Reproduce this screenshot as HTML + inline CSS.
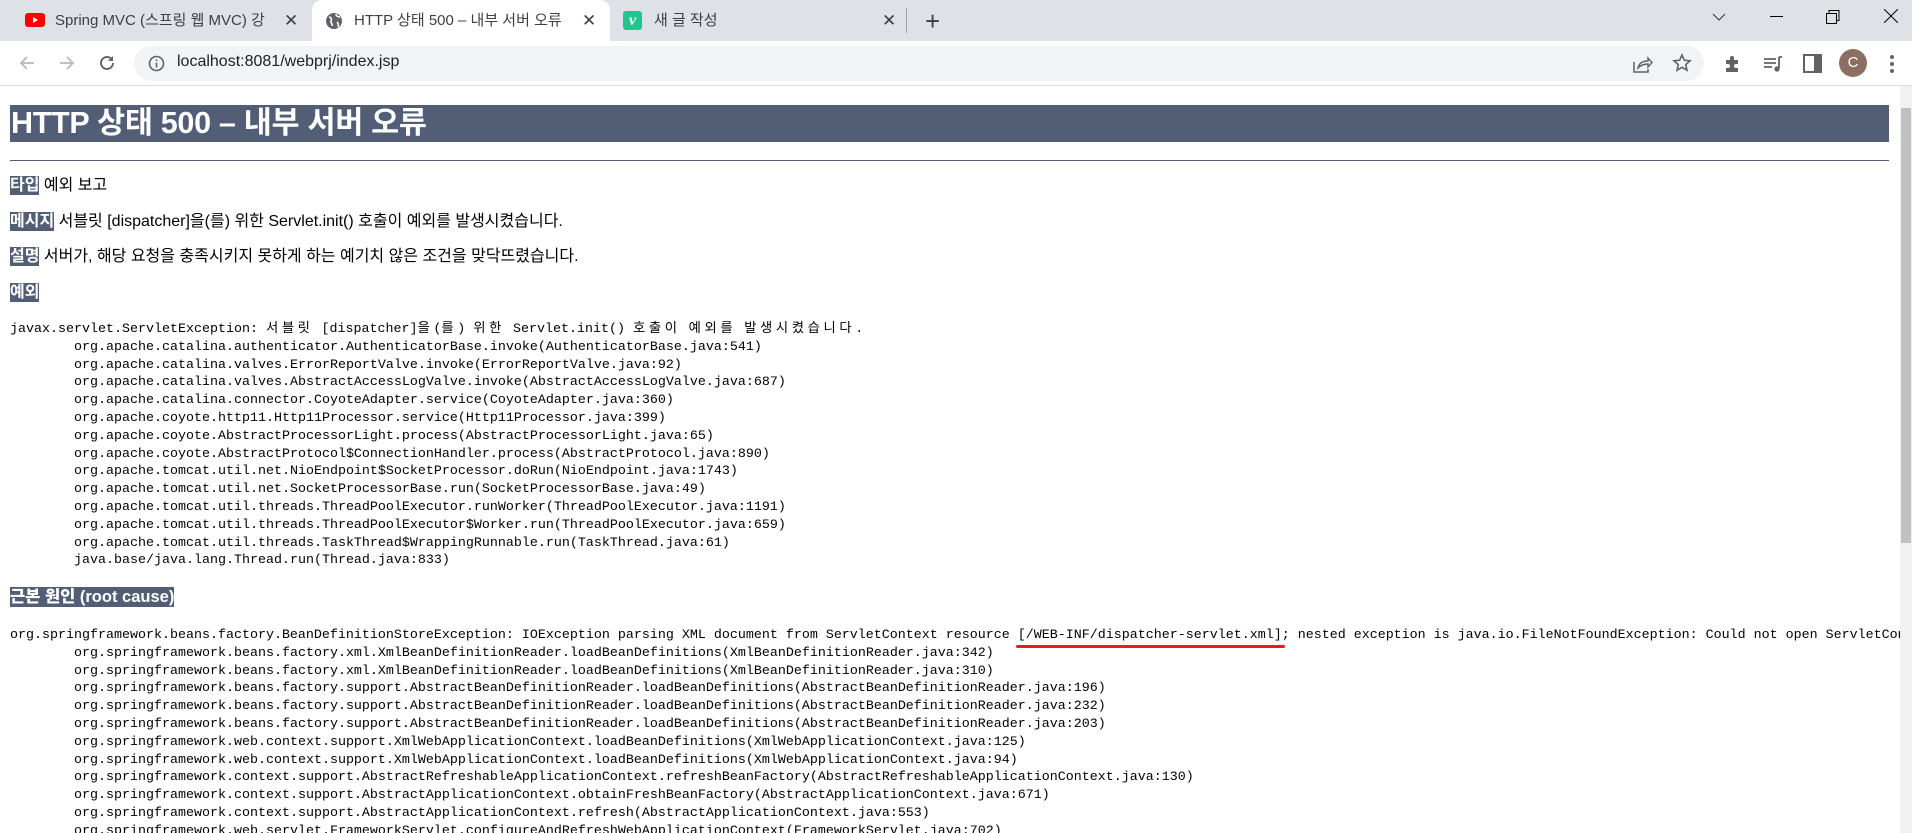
<!DOCTYPE html>
<html><head><meta charset="utf-8">
<style>
*{margin:0;padding:0;box-sizing:border-box}
body{width:1912px;height:833px;overflow:hidden;position:relative;background:#fff;font-family:"Liberation Sans","Noto Sans CJK KR",sans-serif}
.tabbar{position:absolute;left:0;top:0;width:1912px;height:41px;background:#dee1e6}
.tab{position:absolute;top:0;height:41px;font-size:15px;color:#3c4043;line-height:41px;white-space:nowrap}
.tab .x{position:absolute;font-size:17px;color:#3c4043;top:0}
.active{background:#fff;border-radius:10px 10px 0 0}
.toolbar{position:absolute;left:0;top:41px;width:1912px;height:45px;background:#fff;border-bottom:1px solid #dadce0}
.omni{position:absolute;left:134px;top:5px;width:1570px;height:35px;background:#f1f3f4;border-radius:18px}
.omni span{position:absolute;left:43px;top:7px;font-size:16px;color:#202124}
.content{position:absolute;left:0;top:86px;width:1900px;height:747px;overflow:hidden}
.sb{position:absolute;left:1900px;top:86px;width:12px;height:747px;background:#f1f1f1}
.sb div{position:absolute;left:1px;top:22px;width:10px;height:435px;background:#c1c1c1}
h1{position:absolute;left:10px;top:19px;width:1879px;height:37px;background:#525d76;color:#fff;font-size:30.5px;font-weight:bold;line-height:37px;padding-left:1px;font-family:"Liberation Sans","Noto Sans CJK KR",sans-serif;letter-spacing:-0.3px}
.hr{position:absolute;left:10px;top:74px;width:1879px;height:1px;background:#525d76}
.p{position:absolute;left:10px;font-size:16px;line-height:18px;color:#000;white-space:nowrap}
.p b{background:#525d76;color:#fff;padding:1px 0}
pre{position:absolute;left:10px;font-family:"Liberation Mono","Noto Sans CJK KR",monospace;font-size:13.33px;line-height:17.8px;color:#000;white-space:pre}
.k{letter-spacing:3.6px}
.red{position:absolute;left:1016px;top:559px;width:269px;height:3px;background:#e02020;border-radius:2px}
</style></head><body>
<div class="tabbar">
 <div class="tab" style="left:0;width:312px">
  <svg style="position:absolute;left:25px;top:13px" width="20" height="14" viewBox="0 0 20 14"><rect width="20" height="14" rx="3" fill="#f00"/><path d="M8 4v6l5-3z" fill="#fff"/></svg>
  <span style="position:absolute;left:55px">Spring MVC (스프링 웹 MVC) 강</span><span class="x" style="left:284px">✕</span></div>
 <div class="tab active" style="left:312px;width:298px">
  <svg style="position:absolute;left:13px;top:12px" width="18" height="18" viewBox="0 0 18 18"><circle cx="9" cy="9" r="8" fill="#5f6368"/><path d="M4 5c2 0 3 2 2 4s2 2 1 5M11 2c0 2 2 3 4 3M12 10c1 1 2 3 1 5" stroke="#fff" stroke-width="1.6" fill="none"/></svg>
  <span style="position:absolute;left:42px">HTTP 상태 500 – 내부 서버 오류</span><span class="x" style="left:270px">✕</span></div>
 <div class="tab" style="left:610px;width:298px">
  <div style="position:absolute;left:13px;top:11px;width:19px;height:19px;background:#1fc68d;border-radius:3px;color:#fff;font:bold italic 16px/19px 'Liberation Serif',serif;text-align:center">v</div>
  <span style="position:absolute;left:44px">새 글 작성</span><span class="x" style="left:272px">✕</span>
  <div style="position:absolute;left:296px;top:8px;width:1px;height:25px;background:#9aa0a6"></div></div>
 <div style="position:absolute;left:925px;top:6px;font-size:26px;color:#3c4043">+</div>
 <svg style="position:absolute;left:1712px;top:12px" width="14" height="10"><path d="M1 2l6 6 6-6" stroke="#333" fill="none"/></svg>
 <div style="position:absolute;left:1770px;top:16px;width:13px;height:1px;background:#000"></div>
 <svg style="position:absolute;left:1826px;top:10px" width="14" height="14"><rect x="0.5" y="3.5" width="10" height="10" fill="none" stroke="#000"/><path d="M3 3.5V.5h10v10h-2.5" fill="none" stroke="#000"/></svg>
 <svg style="position:absolute;left:1884px;top:9px" width="14" height="14"><path d="M0 0l14 14M14 0L0 14" stroke="#000"/></svg>
</div>
<div class="toolbar">
 <svg style="position:absolute;left:18px;top:13px" width="18" height="18" viewBox="0 0 18 18"><path d="M16 9H3M9 3L3 9l6 6" stroke="#b6b9bd" stroke-width="1.8" fill="none"/></svg>
 <svg style="position:absolute;left:58px;top:13px" width="18" height="18" viewBox="0 0 18 18"><path d="M2 9h13M9 3l6 6-6 6" stroke="#b6b9bd" stroke-width="1.8" fill="none"/></svg>
 <svg style="position:absolute;left:98px;top:13px" width="18" height="18" viewBox="0 0 18 18"><path d="M15 9a6 6 0 1 1-2-4.5" stroke="#5f6368" stroke-width="1.9" fill="none"/><path d="M15 2v5h-5z" fill="#5f6368"/></svg>
 <div class="omni">
  <svg style="position:absolute;left:14px;top:9px" width="17" height="17" viewBox="0 0 17 17"><circle cx="8.5" cy="8.5" r="7" stroke="#5f6368" stroke-width="1.6" fill="none"/><path d="M8.5 7.5v5M8.5 4.5v1.5" stroke="#5f6368" stroke-width="1.6"/></svg>
  <span>localhost:8081/webprj/index.jsp</span>
  <svg style="position:absolute;left:1499px;top:8px" width="20" height="19" viewBox="0 0 20 19"><path d="M1 8v10h14v-3" stroke="#5f6368" stroke-width="1.5" fill="none"/><path d="M5 14c1-5 5-7 10-7V4l4 4.5-4 4.5V10c-4 0-7 1-10 4z" stroke="#5f6368" stroke-width="1.4" fill="none"/></svg>
  <svg style="position:absolute;left:1538px;top:7px" width="20" height="20" viewBox="0 0 20 20"><path d="M10 2l2.4 5.3 5.6.5-4.3 3.8 1.3 5.6L10 14.3 5 17.2l1.3-5.6L2 7.8l5.6-.5z" stroke="#5f6368" stroke-width="1.6" fill="none"/></svg>
 </div>
 <svg style="position:absolute;left:1723px;top:13px" width="20" height="20" viewBox="0 0 20 20"><path d="M3 6h4V4a2 2 0 0 1 4 0v2h4v4h-2a2 2 0 0 0 0 4h2v4H3v-4h2a2 2 0 0 0 0-4H3z" fill="#5f6368"/></svg>
 <svg style="position:absolute;left:1763px;top:13px" width="20" height="20" viewBox="0 0 20 20"><path d="M1 5h12M1 9h12M1 13h8" stroke="#5f6368" stroke-width="1.8"/><path d="M16 3v11" stroke="#5f6368" stroke-width="1.8"/><circle cx="14" cy="15" r="2.6" fill="#5f6368"/><path d="M16 3h3" stroke="#5f6368" stroke-width="1.8"/></svg>
 <svg style="position:absolute;left:1803px;top:13px" width="19" height="19" viewBox="0 0 19 19"><rect x="1" y="1" width="17" height="17" fill="none" stroke="#5f6368" stroke-width="2"/><rect x="11" y="1" width="7" height="17" fill="#5f6368"/></svg>
 <div style="position:absolute;left:1839px;top:8px;width:28px;height:28px;border-radius:50%;background:#8d6e63;color:#fff;font-size:15px;line-height:28px;text-align:center">C</div>
 <svg style="position:absolute;left:1888px;top:13px" width="8" height="20"><circle cx="4" cy="3" r="2" fill="#5f6368"/><circle cx="4" cy="10" r="2" fill="#5f6368"/><circle cx="4" cy="17" r="2" fill="#5f6368"/></svg>
</div>
<div class="content">
<h1>HTTP 상태 500 – 내부 서버 오류</h1>
<div class="hr"></div>
<div class="p" style="top:91px"><b>타입</b> 예외 보고</div>
<div class="p" style="top:127px"><b>메시지</b> 서블릿 [dispatcher]을(를) 위한 Servlet.init() 호출이 예외를 발생시켰습니다.</div>
<div class="p" style="top:162px"><b>설명</b> 서버가, 해당 요청을 충족시키지 못하게 하는 예기치 않은 조건을 맞닥뜨렸습니다.</div>
<div class="p" style="top:198px"><b>예외</b></div>
<pre style="top:235px">javax.servlet.ServletException: <span class="k">서블릿</span> [dispatcher]<span class="k">을</span>(<span class="k">를</span>) <span class="k">위한</span> Servlet.init() <span class="k">호출이</span> <span class="k">예외를</span> <span class="k">발생시켰습니다</span>.
	org.apache.catalina.authenticator.AuthenticatorBase.invoke(AuthenticatorBase.java:541)
	org.apache.catalina.valves.ErrorReportValve.invoke(ErrorReportValve.java:92)
	org.apache.catalina.valves.AbstractAccessLogValve.invoke(AbstractAccessLogValve.java:687)
	org.apache.catalina.connector.CoyoteAdapter.service(CoyoteAdapter.java:360)
	org.apache.coyote.http11.Http11Processor.service(Http11Processor.java:399)
	org.apache.coyote.AbstractProcessorLight.process(AbstractProcessorLight.java:65)
	org.apache.coyote.AbstractProtocol$ConnectionHandler.process(AbstractProtocol.java:890)
	org.apache.tomcat.util.net.NioEndpoint$SocketProcessor.doRun(NioEndpoint.java:1743)
	org.apache.tomcat.util.net.SocketProcessorBase.run(SocketProcessorBase.java:49)
	org.apache.tomcat.util.threads.ThreadPoolExecutor.runWorker(ThreadPoolExecutor.java:1191)
	org.apache.tomcat.util.threads.ThreadPoolExecutor$Worker.run(ThreadPoolExecutor.java:659)
	org.apache.tomcat.util.threads.TaskThread$WrappingRunnable.run(TaskThread.java:61)
	java.base/java.lang.Thread.run(Thread.java:833)</pre>
<div class="p" style="top:502px;font-size:16.5px;font-weight:bold"><b>근본 원인 (root cause)</b></div>
<pre style="top:541px">org.springframework.beans.factory.BeanDefinitionStoreException: IOException parsing XML document from ServletContext resource [/WEB-INF/dispatcher-servlet.xml]; nested exception is java.io.FileNotFoundException: Could not open ServletContext resource [/WEB-INF/dispatcher-servlet.xml]
	org.springframework.beans.factory.xml.XmlBeanDefinitionReader.loadBeanDefinitions(XmlBeanDefinitionReader.java:342)
	org.springframework.beans.factory.xml.XmlBeanDefinitionReader.loadBeanDefinitions(XmlBeanDefinitionReader.java:310)
	org.springframework.beans.factory.support.AbstractBeanDefinitionReader.loadBeanDefinitions(AbstractBeanDefinitionReader.java:196)
	org.springframework.beans.factory.support.AbstractBeanDefinitionReader.loadBeanDefinitions(AbstractBeanDefinitionReader.java:232)
	org.springframework.beans.factory.support.AbstractBeanDefinitionReader.loadBeanDefinitions(AbstractBeanDefinitionReader.java:203)
	org.springframework.web.context.support.XmlWebApplicationContext.loadBeanDefinitions(XmlWebApplicationContext.java:125)
	org.springframework.web.context.support.XmlWebApplicationContext.loadBeanDefinitions(XmlWebApplicationContext.java:94)
	org.springframework.context.support.AbstractRefreshableApplicationContext.refreshBeanFactory(AbstractRefreshableApplicationContext.java:130)
	org.springframework.context.support.AbstractApplicationContext.obtainFreshBeanFactory(AbstractApplicationContext.java:671)
	org.springframework.context.support.AbstractApplicationContext.refresh(AbstractApplicationContext.java:553)
	org.springframework.web.servlet.FrameworkServlet.configureAndRefreshWebApplicationContext(FrameworkServlet.java:702)</pre>
<div class="red"></div>
</div>
<div class="sb"><div></div></div>
</body></html>
